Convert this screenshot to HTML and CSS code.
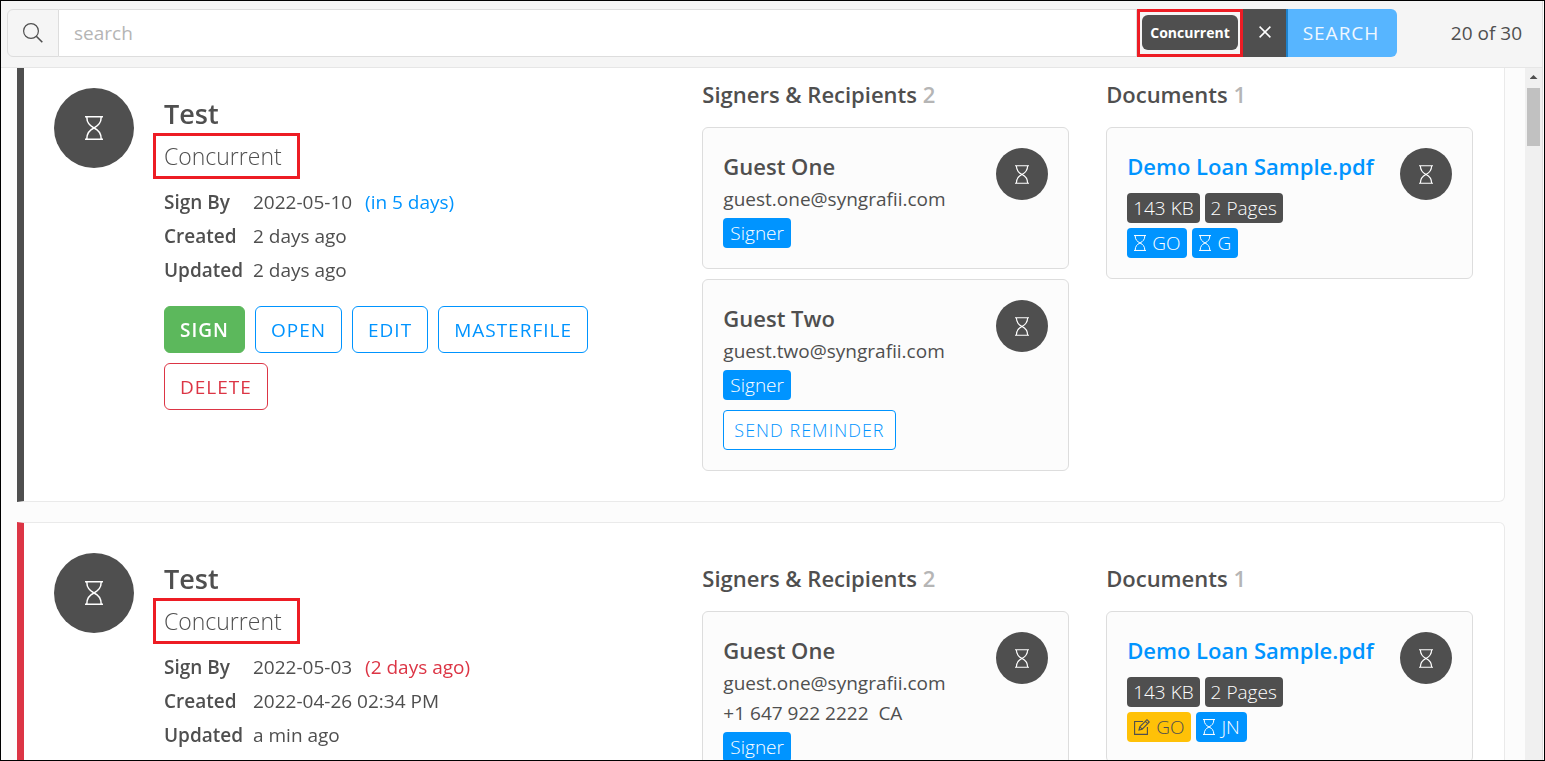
FILE: index.html
```html
<!DOCTYPE html>
<html lang="en">
<head>
    <meta charset="UTF-8">
    <meta name="viewport" content="width=device-width, initial-scale=1.0">
    <title>Packages</title>
    <link rel="stylesheet" href="styles.css">
</head>
<body>
    <svg class="sprite" aria-hidden="true">
        <symbol id="icon-hourglass" viewBox="0 0 18 24">
            <path d="M0 .8h18M0 23.2h18M1.8 1c0 6 2.700 8.500 7.200 11 4.500-2.500 7.200-5 7.200-11M1.800 23c0-6 2.700-9 7.200-11 4.500 2 7.200 5 7.200 11" fill="none" stroke="currentColor" stroke-width="1.500"/>
        </symbol>
        <symbol id="icon-search" viewBox="0 0 20 20">
            <circle cx="8" cy="8" r="7.400" fill="none" stroke="currentColor" stroke-width="1.200"/>
            <path d="M13.300 13.300l6 6" fill="none" stroke="currentColor" stroke-width="1.600"/>
        </symbol>
        <symbol id="icon-close" viewBox="0 0 12 12">
            <path d="M.6.6l10.800 10.800M11.400.6L.6 11.400" fill="none" stroke="currentColor" stroke-width="1.500"/>
        </symbol>
        <symbol id="icon-edit" viewBox="0 0 16 16">
            <path d="M9 2.500H.6v12.900h12.800V8M5 11l.8-3.200L13 .7l2.300 2.300L8.200 10.200zM11.300 2.400l2.300 2.300M5.800 7.800l2.400 2.400" fill="none" stroke="currentColor" stroke-width="1.100"/>
        </symbol>
    </svg>

    <div class="app">
        <form class="toolbar">
            <div class="search-group">
                <label class="search-icon" for="search" aria-label="Search">
                    <svg width="20" height="20"><use href="#icon-search"/></svg>
                </label>
                <input class="search-input" id="search" type="text" placeholder="search">
                <div class="search-filter">
                    <span class="filter-tag">Concurrent</span>
                </div>
                <button class="search-clear" type="button" aria-label="Clear">
                    <svg width="12" height="12"><use href="#icon-close"/></svg>
                </button>
                <button class="search-submit" type="submit">SEARCH</button>
            </div>
            <div class="result-count">20 of 30</div>
        </form>

        <div class="viewport">
            <main class="package-list">
                <article class="package">
                    <section class="summary">
                        <div class="status status-lg"><svg width="18" height="24"><use href="#icon-hourglass"/></svg></div>
                        <div class="summary-body">
                            <h2 class="package-title">Test</h2>
                            <div class="package-type highlight">Concurrent</div>
                            <dl class="dates">
                                <dt>Sign By</dt><dd>2022-05-10 <span class="due">(in 5 days)</span></dd>
                                <dt>Created</dt><dd>2 days ago</dd>
                                <dt>Updated</dt><dd>2 days ago</dd>
                            </dl>
                            <div class="actions">
                                <button class="btn btn-success" type="button">SIGN</button>
                                <button class="btn" type="button">OPEN</button>
                                <button class="btn" type="button">EDIT</button>
                                <button class="btn" type="button">MASTERFILE</button>
                                <button class="btn btn-danger" type="button">DELETE</button>
                            </div>
                        </div>
                    </section>
                    <section class="column">
                        <h3 class="column-title">Signers &amp; Recipients <span class="count">2</span></h3>
                        <div class="card">
                            <div class="card-body">
                                <h4 class="card-title">Guest One</h4>
                                <div class="contact">guest.one@syngrafii.com</div>
                                <div class="badges role"><span class="badge">Signer</span></div>
                            </div>
                            <div class="status"><svg width="14" height="19"><use href="#icon-hourglass"/></svg></div>
                        </div>
                        <div class="card">
                            <div class="card-body">
                                <h4 class="card-title">Guest Two</h4>
                                <div class="contact">guest.two@syngrafii.com</div>
                                <div class="badges role"><span class="badge">Signer</span></div>
                                <button class="btn btn-sm" type="button">SEND REMINDER</button>
                            </div>
                            <div class="status"><svg width="14" height="19"><use href="#icon-hourglass"/></svg></div>
                        </div>
                    </section>
                    <section class="column">
                        <h3 class="column-title">Documents <span class="count">1</span></h3>
                        <div class="card">
                            <div class="card-body">
                                <h4 class="card-title"><a href="#">Demo Loan Sample.pdf</a></h4>
                                <div class="badges doc-badges">
                                    <span class="badge badge-dark">143 KB</span>
                                    <span class="badge badge-dark">2 Pages</span>
                                </div>
                                <div class="badges">
                                    <span class="badge"><svg width="12" height="16"><use href="#icon-hourglass"/></svg>GO</span>
                                    <span class="badge"><svg width="12" height="16"><use href="#icon-hourglass"/></svg>G</span>
                                </div>
                            </div>
                            <div class="status"><svg width="14" height="19"><use href="#icon-hourglass"/></svg></div>
                        </div>
                    </section>
                </article>

                <article class="package package-overdue">
                    <section class="summary">
                        <div class="status status-lg"><svg width="18" height="24"><use href="#icon-hourglass"/></svg></div>
                        <div class="summary-body">
                            <h2 class="package-title">Test</h2>
                            <div class="package-type highlight">Concurrent</div>
                            <dl class="dates">
                                <dt>Sign By</dt><dd>2022-05-03 <span class="due">(2 days ago)</span></dd>
                                <dt>Created</dt><dd>2022-04-26 02:34 PM</dd>
                                <dt>Updated</dt><dd>a min ago</dd>
                            </dl>
                        </div>
                    </section>
                    <section class="column">
                        <h3 class="column-title">Signers &amp; Recipients <span class="count">2</span></h3>
                        <div class="card">
                            <div class="card-body">
                                <h4 class="card-title">Guest One</h4>
                                <div class="contact">guest.one@syngrafii.com</div>
                                <div class="contact">+1 647 922 2222 &nbsp;CA</div>
                                <div class="badges role"><span class="badge">Signer</span></div>
                            </div>
                            <div class="status"><svg width="14" height="19"><use href="#icon-hourglass"/></svg></div>
                        </div>
                    </section>
                    <section class="column">
                        <h3 class="column-title">Documents <span class="count">1</span></h3>
                        <div class="card">
                            <div class="card-body">
                                <h4 class="card-title"><a href="#">Demo Loan Sample.pdf</a></h4>
                                <div class="badges doc-badges">
                                    <span class="badge badge-dark">143 KB</span>
                                    <span class="badge badge-dark">2 Pages</span>
                                </div>
                                <div class="badges">
                                    <span class="badge badge-warning"><svg width="16" height="16"><use href="#icon-edit"/></svg>GO</span>
                                    <span class="badge"><svg width="12" height="16"><use href="#icon-hourglass"/></svg>JN</span>
                                </div>
                            </div>
                            <div class="status"><svg width="14" height="19"><use href="#icon-hourglass"/></svg></div>
                        </div>
                    </section>
                </article>
            </main>
            <div class="scrollbar" aria-hidden="true">
                <div class="scroll-arrow"></div>
                <div class="scroll-thumb"></div>
            </div>
        </div>
    </div>
</body>
</html>
```

FILE: styles.css
```css
* {
    box-sizing: border-box;
}
body {
    margin: 0;
    height: 100vh;
    border: 1px solid #000;
    padding-right: 1px;
    overflow: hidden;
    font-family: "Open Sans", "Noto Sans", sans-serif;
    font-size: 19px;
    line-height: 30px;
    color: #4f4f4f;
    background: #fff;
}
h2, h3, h4, dl, dd {
    margin: 0;
}
a {
    color: #0094ff;
    text-decoration: none;
}
button {
    font-family: inherit;
    cursor: pointer;
}
.sprite {
    display: none;
}
.app {
    height: 100%;
    display: flex;
    flex-direction: column;
    border-right: 1px solid #ddd;
    background: #fcfcfc;
}

/* toolbar */
.toolbar {
    display: flex;
    align-items: center;
    padding: 8px 20px 10px 6px;
    background: #f5f5f5;
    border-bottom: 1px solid #e6e6e6;
}
.search-group {
    flex: 1;
    display: flex;
    height: 48px;
}
.search-icon {
    width: 52px;
    display: flex;
    align-items: center;
    justify-content: center;
    border: 1px solid #ddd;
    border-radius: 6px 0 0 6px;
}
.search-input {
    flex: 1;
    min-width: 0;
    padding: 0 15px;
    border: 1px solid #ddd;
    border-left: 0;
    font-family: inherit;
    font-size: 19px;
    color: #4f4f4f;
    background: #fff;
}
.search-input::placeholder {
    color: #b5b5b5;
}
.search-filter {
    width: 106px;
    padding: 3px 2px 4px 2px;
    display: flex;
    border: 3px solid #ed1c24;
    background: #f5f5f5;
}
.filter-tag {
    flex: 1;
    display: flex;
    align-items: center;
    justify-content: center;
    border-radius: 6px;
    font-size: 14px;
    font-weight: 700;
    color: #fff;
    background: #4f4f4f;
}
.search-clear {
    width: 43px;
    padding: 0;
    border: 0;
    color: #fff;
    background: #4f4f4f;
}
.search-submit {
    width: 111px;
    padding: 0 3px 0 0;
    border: 0;
    border-left: 2px solid #1f82cc;
    border-radius: 0 6px 6px 0;
    font-size: 19px;
    letter-spacing: 1px;
    color: #f0f8ff;
    background: #57b5ff;
}
.result-count {
    width: 125px;
    text-align: right;
}

/* package list */
.viewport {
    flex: 1;
    min-height: 0;
    display: flex;
    overflow: hidden;
}
.package-list {
    flex: 1;
    margin-top: -30px;
    padding: 0 20px 0 16px;
}
.package {
    display: grid;
    grid-template-columns: 5fr 3fr 3fr;
    gap: 37px;
    margin-bottom: 20px;
    padding: 30px 31px 30px 30px;
    border: 1px solid #eaeaea;
    border-left: 7px solid #4f4f4f;
    border-radius: 0 6px 6px 0;
    background: #fff;
}
.package-overdue {
    border-left-color: #dc3545;
}
.summary {
    position: sticky;
    top: 20px;
    align-self: start;
    display: flex;
    gap: 30px;
}
.summary-body {
    flex: 1;
    padding-top: 6px;
}
.package-title {
    font-size: 27px;
    font-weight: 600;
    line-height: 40px;
}
.package-type {
    display: table;
    margin: 4px 0 11px;
    font-size: 23px;
    font-weight: 300;
    line-height: 36px;
}
.highlight {
    position: relative;
}
.highlight::after {
    content: "";
    position: absolute;
    inset: -5px -18px -5px -11px;
    border: 3px solid #ed1c24;
}
.dates {
    display: grid;
    grid-template-columns: 89px 1fr;
    margin-bottom: 19px;
    line-height: 34px;
}
.dates dt {
    font-weight: 600;
}
.due {
    margin-left: 8px;
    color: #0094ff;
}
.package-overdue .due {
    color: #dc3545;
}
.actions {
    display: flex;
    flex-wrap: wrap;
    gap: 10px;
}
.btn {
    height: 47px;
    padding: 0 15px;
    border: 1px solid #0094ff;
    border-radius: 6px;
    font-size: 19px;
    letter-spacing: 1px;
    color: #0094ff;
    background: #fff;
}
.btn-success {
    font-weight: 600;
    color: #fff;
    border-color: #5cb85c;
    background: #5cb85c;
}
.btn-danger {
    color: #dc3545;
    border-color: #dc3545;
}
.btn-sm {
    height: 40px;
    margin-top: 10px;
    padding: 0 10px;
    border-radius: 4px;
    font-size: 18px;
    font-weight: 300;
}

/* status circles */
.status {
    flex: none;
    width: 52px;
    height: 52px;
    display: flex;
    align-items: center;
    justify-content: center;
    border-radius: 50%;
    color: #fff;
    background: #4f4f4f;
}
.status-lg {
    width: 80px;
    height: 80px;
}

/* signer and document cards */
.column-title {
    margin-bottom: 8px;
    font-size: 22px;
    font-weight: 600;
    line-height: 50px;
}
.count {
    color: #b5b5b5;
}
.card {
    display: flex;
    margin-bottom: 10px;
    padding: 20px;
    border: 1px solid #ddd;
    border-radius: 6px;
    background: #fcfcfc;
}
.card:last-child {
    margin-bottom: 0;
}
.card-body {
    flex: 1;
    min-width: 0;
}
.card-title {
    font-size: 22px;
    font-weight: 600;
    line-height: 36px;
    white-space: nowrap;
}
.badges {
    display: flex;
    gap: 5px;
}
.role {
    margin-top: 4px;
}
.doc-badges {
    margin: 9px 0 5px;
}
.badge {
    display: flex;
    align-items: center;
    gap: 6px;
    height: 30px;
    padding: 0 7px;
    border-radius: 4px;
    font-weight: 300;
    color: #fff;
    background: #0094ff;
}
.badge-dark {
    padding: 0 6px;
    background: #4f4f4f;
}
.badge-warning {
    color: #4f4f4f;
    background: #ffc107;
}

/* scrollbar */
.scrollbar {
    width: 17px;
    padding: 7px 2px;
    background: #f0f0f0;
}
.scroll-arrow {
    width: 8px;
    height: 4px;
    margin: 0 auto 9px;
    background: #4f4f4f;
    clip-path: polygon(50% 0, 100% 100%, 0 100%);
}
.scroll-thumb {
    height: 58px;
    background: #c1c1c1;
}
```
